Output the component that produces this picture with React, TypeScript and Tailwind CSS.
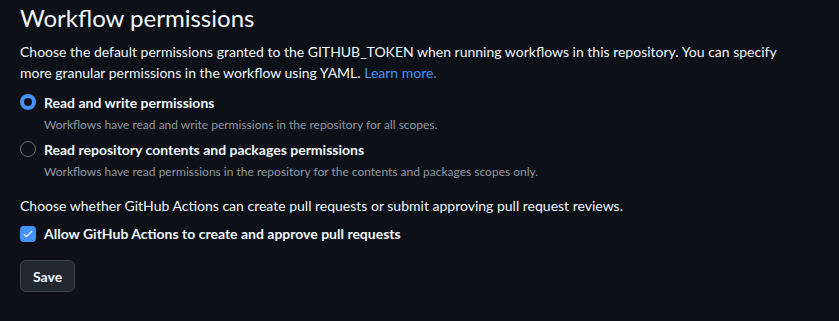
export default function App() {
  return (
    <div
      className="min-h-[321px] w-full bg-[#0d1117] px-5 pt-[3px] text-[#f0f6fc]"
      style={{ fontFamily: 'Lato, "Noto Sans", "Liberation Sans", sans-serif' }}
    >
      <h2 className="text-[24px] font-normal leading-[30px]">Workflow permissions</h2>

      <p className="mt-[8px] max-w-[775px] text-[14px] leading-[21px] text-[#f0f6fc]">
        Choose the default permissions granted to the GITHUB_TOKEN when running workflows in this
        repository. You can specify more granular permissions in the workflow using YAML.{' '}
        <a href="#" className="text-[#4493f8]">
          Learn more.
        </a>
      </p>

      <div className="mt-[10px] flex flex-col gap-[6px]">
        <label className="flex items-start gap-2">
          <span className="mt-[1px] flex h-4 w-4 shrink-0 items-center justify-center rounded-full bg-[#4493f8]">
            <span className="h-2 w-2 rounded-full bg-[#0d1117]" />
          </span>
          <span className="flex flex-col">
            <span className="text-[14px] font-bold leading-[20px]">Read and write permissions</span>
            <span className="mt-[3px] text-[12px] leading-[18px] text-[#9198a1]">
              Workflows have read and write permissions in the repository for all scopes.
            </span>
          </span>
        </label>

        <label className="flex items-start gap-2">
          <span className="mt-[1px] h-4 w-4 shrink-0 rounded-full border border-[#656c76]" />
          <span className="flex flex-col">
            <span className="text-[14px] font-bold leading-[20px]">
              Read repository contents and packages permissions
            </span>
            <span className="mt-[3px] text-[12px] leading-[18px] text-[#9198a1]">
              Workflows have read permissions in the repository for the contents and packages scopes
              only.
            </span>
          </span>
        </label>
      </div>

      <p className="mt-[14px] text-[14px] leading-[21px]">
        Choose whether GitHub Actions can create pull requests or submit approving pull request reviews.
      </p>

      <label className="mt-[8px] flex items-center gap-2">
        <span className="flex h-4 w-4 shrink-0 items-center justify-center rounded-[4px] bg-[#4493f8]">
          <svg viewBox="0 0 16 16" className="h-3 w-3" fill="none">
            <path d="M3 8.5l3 3 7-7" stroke="#ffffff" strokeWidth="1.8" strokeLinecap="round" strokeLinejoin="round" />
          </svg>
        </span>
        <span className="text-[14px] font-bold leading-[20px]">
          Allow GitHub Actions to create and approve pull requests
        </span>
      </label>

      <button className="mt-[16px] h-8 rounded-md border border-[#3d444d] bg-[#212830] px-3 text-[14px] font-bold text-[#f0f6fc]">
        Save
      </button>
    </div>
  )
}
